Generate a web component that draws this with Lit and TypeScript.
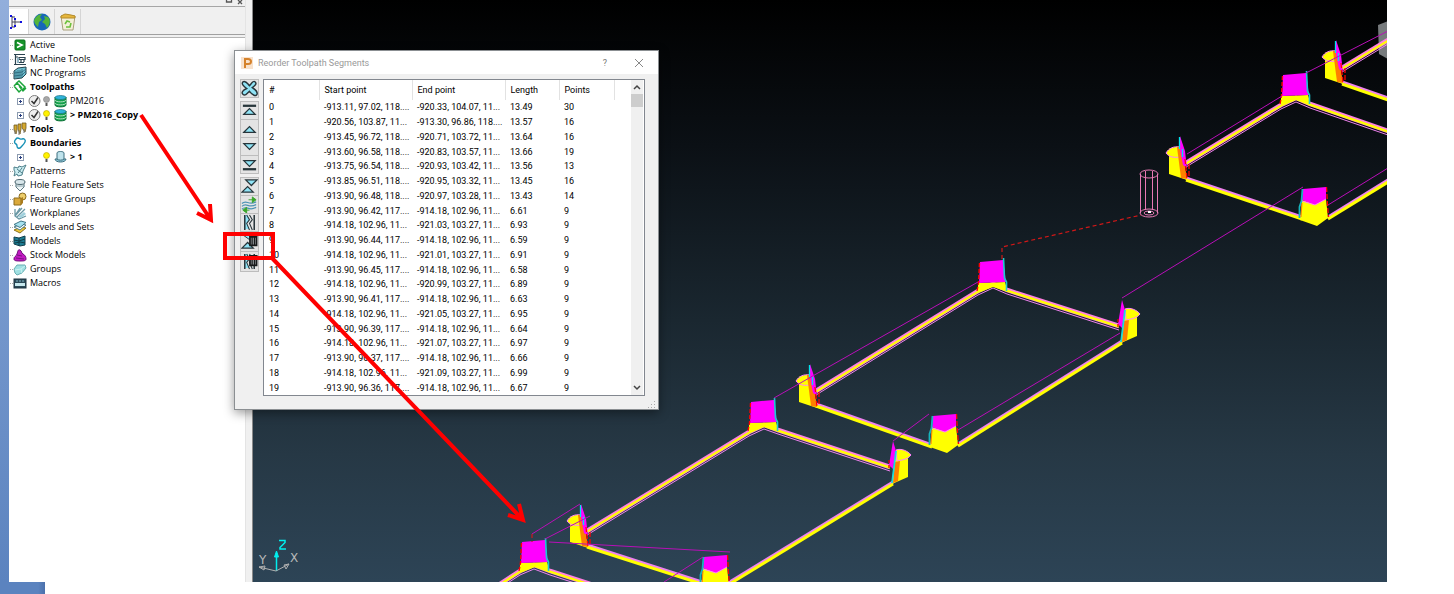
import { LitElement, html, svg, css } from "lit";
import { customElement } from "lit/decorators.js";
import { classMap } from "lit/directives/class-map.js";

const INK = "#24444e";
const ICE = "#8fe3f5";

/* 14 x 14 glyphs used in the explorer tree */
const icons: Record<string, unknown> = {
  active: svg`<rect x="2" y="2" width="10" height="10" rx="1" fill="#16942a" stroke="#0b6e1c"/><path d="M4 4.5 9 7 4 9.5" fill="none" stroke="#fff" stroke-width="1.6"/>`,
  machine: svg`<path d="M1 2.500h11M2 5h3M2.500 3v9M1 12.500h12M6 5.500h6v2H6zM8 8v3M11 8v2M6 10.500h5" fill="none" stroke="#2b4350" stroke-width="1.200"/><path d="M4 6h2v5H4z" fill="#8fb5c4"/>`,
  nc: svg`<path d="M1 5 5 2l8-1v7l-4 4-8 1z" fill="#6fc0d2" stroke="${INK}"/><path d="M3 5v7M5 4v8M7 4v8M9 3v9M1 7l8-1 4-3M1 10l8-1 4-4" stroke="#24596b" stroke-width=".7" fill="none"/>`,
  toolpaths: svg`<path d="M1 6 4 3l5 5M3 3.500 6 1l6 6-3 3M1 6l5 6 2-2M6 6l4 5 3-3" fill="none" stroke="#1ba53a" stroke-width="1.500"/>`,
  tools: svg`<path d="M1 3h3v5l-1 4-2-4zM5 2h3v5l-1 5-2-5zM9 1h4v5l-1 4-3-4z" fill="#d6a92e" stroke="#705a24" stroke-width=".8"/><path d="M2 8v4M6 8v5M11 7v4" stroke="#777"/>`,
  boundaries: svg`<path d="M3 3c2-3 4 1 6 0s4 1 3 3-1 2-3 4-2 3-4 2 0-3-2-4-2-3 0-5z" fill="#fff" stroke="#1590b5" stroke-width="1.400"/>`,
  patterns: svg`<path d="M1 3l4 1 1-2 3 1 4-2-2 4-1 2-1 4-4 1-1-2-3 2 1-4-1-2z" fill="#cdeef2" stroke="#4d7f8a"/><path d="M4 5l5 4M9 4 5 9" stroke="#4d7f8a"/>`,
  hole: svg`<path d="M3 4v5l4 4 4-4V4" fill="#eef5f6" stroke="#5e7880"/><ellipse cx="7" cy="4" rx="5" ry="2.500" fill="#d8e6ea" stroke="#4c666f"/><path d="M2 8h10" stroke="#8ba5ad"/>`,
  feature: svg`<circle cx="9.500" cy="4.500" r="3.500" fill="#edcd6a" stroke="#8b6a1d"/><path d="M1 6h7v7H1z" fill="#dba93a" stroke="#8b6a1d"/><path d="M8 6l2-1v6l-2 2" fill="#a97b1e"/>`,
  workplanes: svg`<path d="M2 3v7l4 3 7-3M2 10l7-8M4 11l8-8M3 8l4-6" fill="none" stroke="#6a98a5" stroke-width="1.300"/><path d="M5 11l6-5 2 2-5 4z" fill="#9fd0dc"/>`,
  levels: svg`<path d="M1 10l7-3 5 1-6 5z" fill="#f2c936" stroke="#8b7320"/><path d="M1 7l7-3 5 1-6 5z" fill="#fff" stroke="#4a7a88"/><path d="M1 4.500 8 1l5 1.500-6 5z" fill="#a7e2f0" stroke="#3d7686"/>`,
  models: svg`<path d="M1 3l5 1 6-2v9l-5 1-6-2z" fill="#1c7c92" stroke="#123f4c"/><path d="M1 6l5 1 6-2M2 9l5-1 5 1M6 4v8" stroke="#0f3c48" fill="none"/>`,
  stock: svg`<path d="M1 11c0-3 2-2 3-5s1-5 3-4 1 3 3 4 3 3 3 5-3 2-6 2-6 0-6-2z" fill="#c21ac2" stroke="#6d0c78"/><path d="M4 7l5 1M3 10l8 1" stroke="#7c1087"/>`,
  groups: svg`<path d="M1 7l3-4h8l1 3-4 5-5 2-2-2z" fill="#9fe0e2" stroke="#69aeb3"/><path d="M2 8l6-1 4-3M8 7l1 4" stroke="#cbf3f3" fill="none"/>`,
  macros: svg`<rect x="1" y="3" width="12" height="9" fill="#2c4a59" stroke="#1d3340"/><rect x="2" y="7" width="10" height="3" fill="#c7e8ee"/><path d="M3 5h2M6 5h2M9 5h2" stroke="#7fb4c4"/>`,
};

interface TreeItem { label: string; icon: string; bold?: boolean }
const HEAD: TreeItem[] = [
  { label: "Active", icon: "active" },
  { label: "Machine Tools", icon: "machine" },
  { label: "NC Programs", icon: "nc" },
  { label: "Toolpaths", icon: "toolpaths", bold: true },
];
const MIDDLE: TreeItem[] = [
  { label: "Tools", icon: "tools", bold: true },
  { label: "Boundaries", icon: "boundaries", bold: true },
];
const TAIL: TreeItem[] = [
  { label: "Patterns", icon: "patterns" },
  { label: "Hole Feature Sets", icon: "hole" },
  { label: "Feature Groups", icon: "feature" },
  { label: "Workplanes", icon: "workplanes" },
  { label: "Levels and Sets", icon: "levels" },
  { label: "Models", icon: "models" },
  { label: "Stock Models", icon: "stock" },
  { label: "Groups", icon: "groups" },
  { label: "Macros", icon: "macros" },
];

const plus = svg`<rect x=".5" y="4.500" width="6" height="6" fill="#fff" stroke="#8c9bb0"/><path d="M2 7.500h3M3.500 6v3" stroke="#2a3f80"/>`;
const bulb = (on: boolean) => svg`<circle cx="3.500" cy="5.500" r="3" fill="${on ? "#fff200" : "#a8a8a8"}" stroke="${on ? "#c2ae00" : "#8a8a8a"}" stroke-width=".7"/><path d="M2.500 9h2v3h-2z" fill="#555"/>`;
const tick = svg`<circle cx="6.500" cy="7" r="5.500" fill="#eee" stroke="#7e7e7e"/><path d="M3.500 7 6 9.500l4-6" fill="none" stroke="#333" stroke-width="1.500"/>`;
const disc = svg`<path d="M1 3v8c0 2.500 11 2.500 11 0V3" fill="#14a04a" stroke="#0a6e35"/><ellipse cx="6.500" cy="3.500" rx="5.500" ry="2" fill="#2fb4d8" stroke="#1b6f86" stroke-width=".7"/><path d="M1 6c0 2.500 11 2.500 11 0M1 9c0 2.500 11 2.500 11 0" fill="none" stroke="#d7f4e0" stroke-width=".8"/>`;
const hat = svg`<path d="M1 9c0 4 11 4 11 0z" fill="#8bc5d6" stroke="#3d6f7f"/><path d="M3 9V3c0-2 7-2 7 0v6c-1 1.500-6 1.500-7 0z" fill="#bfe3ec" stroke="#3d6f7f"/>`;

/* 18 x 18 glyphs of the dialog tool column */
const UP = (x: number, y: number) => svg`<path d="M${x} ${y + 6} ${x + 6} ${y}l6 6z" fill="${ICE}" stroke="#27353a" stroke-width="1.300"/>`;
const DOWN = (x: number, y: number) => svg`<path d="M${x} ${y}h12l-6 6z" fill="${ICE}" stroke="#27353a" stroke-width="1.300"/>`;
const bin = svg`<path d="M9.500 4h7v9h-7zM8.500 3h9" fill="#8c9294" stroke="#17191a" stroke-width="1.800"/><path d="M11.800 4v9M14.300 4v9" stroke="#17191a" stroke-width="1.200"/>`;
const wiggle = svg`<path d="M4 1h3l2 5-3 4 3 6H4z" fill="${ICE}"/><path d="M4 1v16M14 1v16" stroke="#27353a" stroke-width="1.600"/><path d="M6 1l3 5-3 4 3 7M9 1l3 5-3 4 3 7" fill="none" stroke="#27353a" stroke-width="1.100"/>`;

const TOOLS: { name: string; art: unknown }[][] = [
  [{ name: "Delete selected", art: svg`<path d="M2 2c3-2 5 2 7 4 2-2 4-6 6-4s0 4-3 6c3 2 6 4 5 7s-5 1-8-3c-3 3-5 5-7 3s0-4 4-6C3 7 0 4 2 2z" fill="${ICE}" stroke="#27353a" stroke-width="1.500"/>` }],
  [
    { name: "Move to start", art: svg`<path d="M2 4h14" stroke="#27353a" stroke-width="2.400"/>${UP(3, 7)}` },
    { name: "Move up", art: UP(3, 7) },
    { name: "Move down", art: DOWN(3, 6) },
    { name: "Move to end", art: svg`${DOWN(3, 5)}<path d="M2 14h14" stroke="#27353a" stroke-width="2.400"/>` },
  ],
  [
    { name: "Reverse order", art: svg`${DOWN(5, 2)}${UP(1, 9)}` },
    { name: "Reverse direction", art: svg`<path d="M1 8c5-5 7 3 15-2M1 11c5-5 7 3 15-2M1 14c5-5 7 3 15-2" fill="none" stroke="#4d93b5" stroke-width="1.300"/><path d="M8 4h5M12 1l4 3-4 3zM9 15H5M6 12l-4 3 4 3z" fill="#3aa62a" stroke="#3aa62a"/>` },
    { name: "Alternate direction", art: wiggle },
    { name: "Automatic reordering", art: svg`<path d="M2 2h9L9 7z" fill="${ICE}" stroke="#27353a"/>${UP(1, 10)}${bin}` },
    { name: "Automatic direction", art: svg`${wiggle}${bin}` },
  ],
];

const P = "-914.18, 102.96, 11...";
const ROWS: [string, string, string, string][] = [
  ["-913.11, 97.02, 118....", "-920.33, 104.07, 11...", "13.49", "30"],
  ["-920.56, 103.87, 11...", "-913.30, 96.86, 118....", "13.57", "16"],
  ["-913.45, 96.72, 118....", "-920.71, 103.72, 11...", "13.64", "16"],
  ["-913.60, 96.58, 118....", "-920.83, 103.57, 11...", "13.66", "19"],
  ["-913.75, 96.54, 118....", "-920.93, 103.42, 11...", "13.56", "13"],
  ["-913.85, 96.51, 118....", "-920.95, 103.32, 11...", "13.45", "16"],
  ["-913.90, 96.48, 118....", "-920.97, 103.28, 11...", "13.43", "14"],
  ["-913.90, 96.42, 117....", P, "6.61", "9"],
  [P, "-921.03, 103.27, 11...", "6.93", "9"],
  ["-913.90, 96.44, 117....", P, "6.59", "9"],
  [P, "-921.01, 103.27, 11...", "6.91", "9"],
  ["-913.90, 96.45, 117....", P, "6.58", "9"],
  [P, "-920.99, 103.27, 11...", "6.89", "9"],
  ["-913.90, 96.41, 117....", P, "6.63", "9"],
  [P, "-921.05, 103.27, 11...", "6.95", "9"],
  ["-913.90, 96.39, 117....", P, "6.64", "9"],
  [P, "-921.07, 103.27, 11...", "6.97", "9"],
  ["-913.90, 96.37, 117....", P, "6.66", "9"],
  [P, "-921.09, 103.27, 11...", "6.99", "9"],
  ["-913.90, 96.36, 117....", P, "6.67", "9"],
];

/* corner posts of the pocket walls */
const at = (dx: number, dy: number, art: unknown) => svg`<g transform="translate(${dx} ${dy})">${art}</g>`;
const leftPost = svg`
  <path d="M570 521h13l5 27-6-2-12-4z" fill="#ff0"/>
  <path d="M567 521c3-5 8-7 14-6v10c-6 1-11 0-14-4z" fill="#ff0" stroke="#ff80ff"/>
  <path d="M578 515h4l6 32-6-1z" fill="#ff7f00"/>
  <path d="M581 504l5 15 2 17-4-3-3-15z" fill="#f0f"/>
  <path d="M580.500 505v12M583.500 517v8" stroke="#00e5ee" stroke-width="1.300"/>
  <path d="M586 527l2 20M590 532v14" stroke="#f00" stroke-width="1.300" stroke-dasharray="5 2"/>`;
const apexPost = svg`
  <path d="M749 423l27-1 3 10-15-5-15 6z" fill="#ff0"/>
  <path d="M751 402l23-2 3 22-27 1z" fill="#f0f"/>
  <path d="M750.500 403l-1 20-1.500 8" fill="none" stroke="#f00" stroke-width="1.400" stroke-dasharray="4 2"/>
  <path d="M774.500 398l1 20 2 4v9" fill="none" stroke="#1cc9d4" stroke-width="1.600"/>`;
const bottomPost = svg`
  <path d="M932 427l13 4 11-5 2 19-11 8-17-6z" fill="#ff0"/>
  <path d="M933 416l23-2v12l-11 6-13-5z" fill="#f0f"/>
  <path d="M932 428l13 4 11-6" fill="none" stroke="#ff80ff"/>
  <path d="M932.500 416l-1 12-2 6v11" fill="none" stroke="#16b5bd" stroke-width="1.800"/>
  <path d="M932 430l-1 14" stroke="#ff7f00"/>
  <path d="M956.500 414l1 18 1 12" fill="none" stroke="#f00" stroke-width="1.300" stroke-dasharray="5 2"/>`;
const rightPost = svg`
  <path d="M895 452l13 5v20l-16 7z" fill="#ff0"/>
  <path d="M896 450c5-2 12 1 15 5-4 5-10 5-14 6z" fill="#ff0" stroke="#ff80ff"/>
  <path d="M895 462l5-1-2 20-5 2z" fill="#ff7f00"/>
  <path d="M893 441l3 10-3 18-4-4z" fill="#f0f"/>
  <path d="M896 451l-2 16-2 16" fill="none" stroke="#19d9df" stroke-width="1.800"/>
  <path d="M889 460v8" stroke="#d00" stroke-width="1.300" stroke-dasharray="3 2"/>`;

const upperWalls = [
  "M500 584 520 571 534 565 550 571 590 584",
  "M587 531 749 432 764 425 778 430 890 467",
  "M816 391 978 291 993 284 1007 290 1119 326",
  "M1186 163 1281 105 1296 98 1310 104 1388 131",
  "M1342 68 1388 40",
];
const lowerWalls = [
  "M587 546 705 584",
  "M893 483 728 584",
  "M816 405 932 446",
  "M958 445 1122 342",
  "M1186 179 1302 218",
  "M1328 218 1388 181",
  "M1342 83 1388 99",
];
const links =
  "M532 534 580 504M545 539 590 516M549 542 730 552M664 582 703 557M774 398 978 282M893 441 929 414M958 430 1120 333M1122 298 1303 187M1187 154 1282 96M1306 73 1388 31M1328 205 1388 168";

@customElement("tree-panel")
class TreePanel extends LitElement {
  static styles = css`
    :host { display: flex; flex-direction: column; background: #fff; }
    .strip { height: 6px; background: #f0f0f0; border-bottom: 1px solid #a6a6a6; display: flex; justify-content: flex-end; }
    .strip svg { display: block; }
    .tabs { display: flex; height: 25px; padding-top: 2px; background: #f0f0f0; border-bottom: 1px solid #a0a0a0; box-shadow: 0 2px #f0f0f0, 0 3px #b4b4b4; margin-bottom: 3px; }
    .tab { width: 26px; padding: 0; border: 0; border-right: 1px solid #d5d5d5; background: #f0f0f0; display: grid; place-items: center; }
    .tab:first-child { width: 20px; background: #fff; justify-items: start; }
    ul { list-style: none; margin: 0; padding: 0 0 0 1px; }
    li { display: flex; align-items: center; height: 14px; font-size: 9px; line-height: 14px; white-space: nowrap; color: #000; }
    .icon { margin: 0 3px; flex: none; }
    .stub { width: 3px; border-top: 1px dotted #aaa; margin-right: -3px; }
    .bold { font-weight: 700; }
    .child { padding-left: 7px; gap: 2px; }
    .child svg { flex: none; }
    .child span { margin-left: 1px; }
    .gap { width: 13px; }
  `;
  private item(i: TreeItem) {
    return html`<li class=${classMap({ bold: !!i.bold })}><i class="stub"></i><svg class="icon" width="14" height="14">${icons[i.icon]}</svg>${i.label}</li>`;
  }
  render() {
    return html`
      <div class="strip"><svg width="24" height="6"><path d="M5.500 0v2h5V0M17 4l4-4M21 4l-4-4" fill="none" stroke="#555" stroke-width="1.300"/></svg></div>
      <div class="tabs">
        <button class="tab" aria-label="Explorer"><svg width="16" height="18"><path d="M3 3v11M3 4h3M3 9h9M3 14h3M6 5v8" fill="none" stroke="#445"/><path d="M1 2h2v2H1zM5 5h2v2H5zM5 12h2v2H5zM11 8h2v2h-2zM1 14h2v2H1z" fill="#11d"/></svg></button>
        <button class="tab" aria-label="Browser"><svg width="18" height="18"><circle cx="9" cy="9" r="8.500" fill="#1767b8"/><path d="M1 7c2-4 5-6 8-6l-2 3 2 3-3 2-1 5c-2-2-4-4-4-7zM11 3l4 1c3 3 2 8-1 11l-2-4-3-2 3-3z" fill="#53b43a"/></svg></button>
        <button class="tab" aria-label="Recycle bin"><svg width="18" height="18"><path d="M2 3h14l-2 14H4z" fill="#f4efd8" stroke="#a99f7c"/><path d="M2 3l4-2 6 1 4 1v2H2z" fill="#e6b63c" stroke="#b48b2a"/><path d="M6 11l2-3 3 1M12 10l-1 4H7" fill="none" stroke="#6cc03c" stroke-width="1.600"/></svg></button>
      </div>
      <ul>
        ${HEAD.map((i) => this.item(i))}
        <li class="child"><svg width="9" height="14">${plus}</svg><svg width="13" height="14">${tick}</svg><svg width="9" height="14">${bulb(false)}</svg><svg width="13" height="14">${disc}</svg><span>PM2016</span></li>
        <li class="child bold"><svg width="9" height="14">${plus}</svg><svg width="13" height="14">${tick}</svg><svg width="9" height="14">${bulb(true)}</svg><svg width="13" height="14">${disc}</svg><span>&gt; PM2016_Copy</span></li>
        ${MIDDLE.map((i) => this.item(i))}
        <li class="child bold"><svg width="9" height="14">${plus}</svg><i class="gap"></i><svg width="9" height="14">${bulb(true)}</svg><svg width="13" height="14">${hat}</svg><span>&gt; 1</span></li>
        ${TAIL.map((i) => this.item(i))}
      </ul>`;
  }
}

@customElement("model-view")
class ModelView extends LitElement {
  static styles = css`
    :host { display: block; background: linear-gradient(#000 0%, #0b1015 25%, #1a2730 55%, #263845 78%, #2d4456 100%); overflow: hidden; }
    .scene { display: block; width: 100%; height: 100%; }
    .axis { font: 12px "DejaVu Sans", sans-serif; }
  `;
  render() {
    return html`<svg class="scene" viewBox="253 0 1134 582" preserveAspectRatio="xMinYMin slice" role="img" aria-label="Toolpath view">
      <path d="M1378 25l10-4v38l-9-5z" fill="#777b7d"/>
      ${upperWalls.map((d) => svg`<g fill="none">
        <path d="${d}" stroke="#ee82ee" transform="translate(0 4)"/>
        <path d="${d}" stroke="#ff80e0" stroke-width="4.500"/>
        <path d="${d}" stroke="#ff0" stroke-width="2.200" transform="translate(0 .6)"/></g>`)}
      ${lowerWalls.map((d) => svg`<g fill="none">
        <path d="${d}" stroke="#ee82ee" stroke-width="3" transform="translate(0 -1)"/>
        <path d="${d}" stroke="#ff0" stroke-width="3" transform="translate(0 1)"/></g>`)}
      ${at(-229, 140, apexPost)}${at(0, 0, apexPost)}${at(229, -140, apexPost)}${at(532, -327, apexPost)}
      ${at(0, 0, leftPost)}${at(229, -140, leftPost)}${at(599, -368, leftPost)}${at(755, -464, leftPost)}
      ${at(-229, 141, bottomPost)}${at(0, 0, bottomPost)}${at(370, -227, bottomPost)}
      ${at(0, 0, rightPost)}${at(229, -141, rightPost)}
      <path d="${links}" fill="none" stroke="#b80fb8"/>
      <path d="M532 534v8M1002 259v-12l139-32" fill="none" stroke="#d01818" stroke-dasharray="4 3" stroke-width="1.200"/>
      <g fill="none" stroke="#e879b4"><ellipse cx="1149" cy="174" rx="9" ry="4"/><ellipse cx="1149" cy="213" rx="9" ry="4"/><ellipse cx="1149" cy="213" rx="5" ry="2"/><path d="M1140.500 174v39M1145.500 171v39M1152.500 171v39M1157.500 174v39"/></g>
      <path d="M1148 212h3" stroke="#fff" stroke-width="2"/>
      <g fill="none"><path d="M276.500 571v-18" stroke="#0ee" stroke-width="1.500"/><path d="M274.500 557l2-6 2 6z" fill="#0ee" stroke="#0ee"/>
      <path d="M276 571l-17-4 6-1-1 4-5-3M276 571l13-7-5 1 2 4 3-5" stroke="#b0b0b0"/>
      <path d="M279 540.500h6v2l-5 5v1.500h6" stroke="#0ee" stroke-width="1.500"/></g>
      <g class="axis" fill="#b8b8b8"><text x="259" y="564">Y</text><text x="290" y="562">X</text></g>
    </svg>`;
  }
}

@customElement("reorder-dialog")
class ReorderDialog extends LitElement {
  static styles = css`
    :host { display: flex; flex-direction: column; background: #f0f0f0; border: 1px solid #8b8f92; box-sizing: border-box; box-shadow: 0 3px 10px rgba(0, 0, 0, 0.4); color: #000; font-family: Roboto, "Open Sans", sans-serif; }
    .title { display: flex; align-items: center; gap: 5px; height: 23px; padding: 0 11px 0 6px; background: #fff; color: #999; font-size: 9px; }
    h1 { flex: 1; margin: 0; font-size: 9px; font-weight: 400; }
    .title button { border: 0; padding: 0; background: none; color: #777; font: inherit; width: 16px; height: 16px; display: grid; place-items: center; }
    .title button + button { margin-left: 13px; }
    .body { display: flex; flex: 1; gap: 4px; padding: 5px 13px 0 5px; }
    .tools { display: flex; flex-direction: column; gap: 3px; width: 19px; }
    .group { display: flex; flex-direction: column; border-bottom: 1px solid #bdbdbd; }
    .tool { height: 18px; padding: 0; border: 1px solid #bdbdbd; border-bottom: 0; background: #e4e4e4; display: grid; place-items: center; box-sizing: border-box; }
    .tool:nth-child(n + 4):nth-last-child(-n + 2):not(:nth-child(4):last-child) { height: 20px; }
    .tool svg { display: block; }
    .list { flex: 1; display: flex; background: #fff; border: 1px solid #82878f; padding-right: 1px; }
    .grid { flex: 1; }
    table { width: 100%; height: 315px; table-layout: fixed; border-collapse: collapse; font-size: 9px; line-height: 14px; }
    th { height: 20px; font-weight: 400; text-align: left; padding: 0 0 0 5px; border-right: 1px solid #e2e2e2; }
    th:last-child { border-right: 0; }
    td { padding: 0 0 0 5px; white-space: nowrap; overflow: hidden; }
    .c0 { width: 55px; } .c1 { width: 93px; } .c3 { width: 54px; } .c4 { width: 55px; }
    .scroll { width: 12px; background: #f0f0f0; display: flex; flex-direction: column; }
    .thumb { height: 13px; background: #cdcdcd; }
    .scroll svg { display: block; }
    .space { flex: 1; }
    .foot { height: 13px; display: flex; justify-content: flex-end; align-items: flex-end; }
  `;
  render() {
    return html`
      <div class="title">
        <svg width="12" height="12"><rect width="12" height="12" fill="#f8e2cd"/><path d="M4 11V2h3c4 0 4 5 0 5H5" fill="none" stroke="#d5822b" stroke-width="2"/></svg>
        <h1>Reorder Toolpath Segments</h1>
        <button aria-label="Help">?</button>
        <button aria-label="Close"><svg width="10" height="10"><path d="M1 1l8 8M9 1 1 9" stroke="#888"/></svg></button>
      </div>
      <div class="body">
        <div class="tools">
          ${TOOLS.map((g) => html`<div class="group">${g.map((t) => html`<button class="tool" aria-label=${t.name}><svg width="17" height="17" viewBox="0 0 18 18">${t.art}</svg></button>`)}</div>`)}
        </div>
        <div class="list">
          <div class="grid"><table>
            <colgroup><col class="c0"><col class="c1"><col class="c1"><col class="c3"><col class="c4"><col></colgroup>
            <thead><tr><th>#</th><th>Start point</th><th>End point</th><th>Length</th><th>Points</th><th></th></tr></thead>
            <tbody>${ROWS.map((r, i) => html`<tr><td>${i}</td>${r.map((c) => html`<td>${c}</td>`)}<td></td></tr>`)}</tbody>
          </table></div>
          <div class="scroll">
            <svg width="12" height="14"><path d="M3 9l3-3 3 3" fill="none" stroke="#444" stroke-width="1.500"/></svg>
            <div class="thumb"></div><div class="space"></div>
            <svg width="12" height="14"><path d="M3 5l3 3 3-3" fill="none" stroke="#444" stroke-width="1.500"/></svg>
          </div>
        </div>
      </div>
      <div class="foot"><svg width="10" height="9"><path d="M6 1h1v1H6zM3 4h1v1H3zM6 4h1v1H6zM0 7h1v1H0zM3 7h1v1H3zM6 7h1v1H6z" fill="#aaa"/></svg></div>`;
  }
}

@customElement("app-root")
class AppRoot extends LitElement {
  static styles = css`
    :host { display: flex; flex-direction: column; position: relative; min-height: 100vh; background: #fff; font-family: "Open Sans", "Noto Sans", sans-serif; }
    .work { flex: 1; display: flex; padding-right: 67px; }
    .edge { width: 9px; background: linear-gradient(#92aedb, #5b83bf); }
    tree-panel { width: 236px; }
    .split { width: 6px; background: #f0f0f0; border-left: 1px solid #e4e4e4; border-right: 1px solid #8a8a8a; }
    model-view { flex: 1; min-width: 0; }
    .base { width: 45px; height: 12px; background: linear-gradient(90deg, #5b83bf 85%, #4b70ab); }
    reorder-dialog { position: absolute; left: 234px; top: 50px; width: 425px; }
    .marks { position: absolute; left: 0; top: 0; pointer-events: none; }
  `;
  render() {
    return html`
      <div class="work">
        <div class="edge"></div>
        <tree-panel></tree-panel>
        <div class="split"></div>
        <model-view></model-view>
      </div>
      <div class="base"></div>
      <reorder-dialog></reorder-dialog>
      <svg class="marks" width="540" height="540" fill="none" stroke="#f00" stroke-width="4">
        <rect x="225" y="234" width="48" height="24"/>
        <path d="M141 115 211 220M197 213l14 7-1-16M272 258 523 520M508 515l15 5-4-16"/>
      </svg>`;
  }
}
